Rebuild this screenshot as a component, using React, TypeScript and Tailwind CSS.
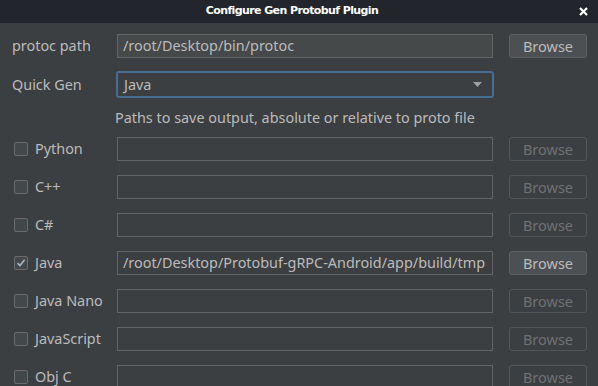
import React from 'react';

const LANGS = [
  { name: 'Python', checked: false, path: '' },
  { name: 'C++', checked: false, path: '' },
  { name: 'C#', checked: false, path: '' },
  { name: 'Java', checked: true, path: '/root/Desktop/Protobuf-gRPC-Android/app/build/tmp' },
  { name: 'Java Nano', checked: false, path: '' },
  { name: 'JavaScript', checked: false, path: '' },
  { name: 'Obj C', checked: false, path: '' },
];

function BrowseButton({ disabled }: { disabled?: boolean }) {
  return (
    <button
      className={
        disabled
          ? 'w-[78px] h-[24px] rounded-[3px] border border-[#535658] bg-[#3c3f41] text-[#6f7173] text-[14.5px] leading-none'
          : 'w-[78px] h-[24px] rounded-[3px] border border-[#5e6163] bg-[#4c5052] text-[#bbbbbb] text-[14.5px] leading-none'
      }
    >
      Browse
    </button>
  );
}

function CheckBox({ checked }: { checked: boolean }) {
  return (
    <span className="w-[14px] h-[14px] border border-[#6b6b6b] rounded-[2px] bg-[#43494a] flex items-center justify-center shrink-0">
      {checked && (
        <svg width="10" height="10" viewBox="0 0 10 10">
          <path d="M1.5 5.2 L4 7.6 L8.6 1.8" stroke="#a9b7c6" strokeWidth="1.6" fill="none" />
        </svg>
      )}
    </span>
  );
}

export default function App() {
  return (
    <div
      className="w-[598px] h-[386px] overflow-hidden bg-[#3c3f41] text-[#bbbbbb]"
      style={{ fontFamily: '"Noto Sans", "Open Sans", sans-serif' }}
    >
      {/* Title bar */}
      <div className="h-[23px] bg-[#22252b] flex items-center justify-center pr-[14px] relative">
        <span
          className="text-white text-[11px] font-bold tracking-[-0.6px] whitespace-nowrap"
          style={{ fontFamily: '"DejaVu Sans", sans-serif' }}
        >
          Configure Gen Protobuf Plugin
        </span>
        <svg className="absolute right-[10px] top-[7px]" width="9" height="9" viewBox="0 0 9 9">
          <path d="M1 1 L8 8 M8 1 L1 8" stroke="#ffffff" strokeWidth="2.2" />
        </svg>
      </div>

      <div className="pt-[11px] text-[14.4px]">
        {/* protoc path */}
        <div className="flex items-center h-[24px]">
          <span className="w-[117px] pl-[12px]">protoc path</span>
          <div className="w-[376px] h-[24px] border border-[#646464] bg-[#45494a] flex items-center px-[5px]">
            /root/Desktop/bin/protoc
          </div>
          <div className="ml-[16px]">
            <BrowseButton />
          </div>
        </div>

        {/* Quick Gen */}
        <div className="flex items-center h-[27px] mt-[13px]">
          <span className="w-[116px] pl-[12px]">Quick Gen</span>
          <div className="w-[378px] h-[27px] border-2 border-[#466d94] rounded-[3px] bg-[#3c3f41] flex items-center justify-between pl-[6px] pr-[10px]">
            <span>Java</span>
            <svg width="9" height="5" viewBox="0 0 9 5">
              <path d="M0 0 L9 0 L4.5 5 Z" fill="#a0a0a0" />
            </svg>
          </div>
        </div>

        <div className="pl-[115px] mt-[8px] h-[24px] flex items-center">
          Paths to save output, absolute or relative to proto file
        </div>

        {/* Languages */}
        <div className="mt-[7px] flex flex-col gap-[14px]">
          {LANGS.map((l) => (
            <div key={l.name} className="flex items-center h-[24px]">
              <div className="w-[117px] pl-[14px] flex items-center gap-[7px]">
                <CheckBox checked={l.checked} />
                <span>{l.name}</span>
              </div>
              <div className="w-[376px] h-[24px] border border-[#646464] bg-[#3c3f41] flex items-center pl-[5px] pr-[1px] whitespace-nowrap overflow-hidden">
                {l.path}
              </div>
              <div className="ml-[16px]">
                <BrowseButton disabled={!l.checked} />
              </div>
            </div>
          ))}
        </div>
      </div>
    </div>
  );
}
